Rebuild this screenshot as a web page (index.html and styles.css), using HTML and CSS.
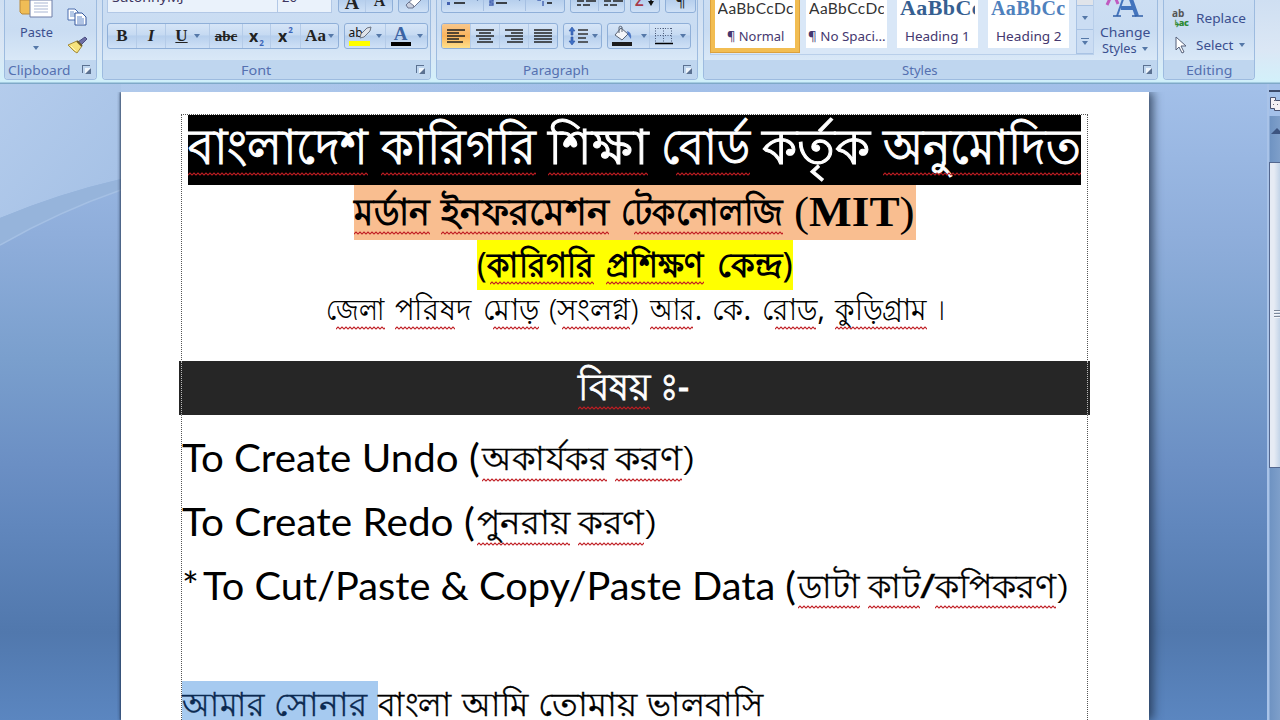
FILE: index.html
```
<!DOCTYPE html>
<html lang="bn">
<head>
    <meta charset="UTF-8">
    <meta name="viewport" content="width=device-width, initial-scale=1.0">
    <title>Document - Microsoft Word</title>
    <link rel="stylesheet" href="styles.css">
</head>
<body>

    <!-- Ribbon -->
    <div class="ribbon">
        <div class="group clipboard">
            <div class="group-body">
                <div class="paste">
                    <svg width="36" height="19" viewBox="0 0 36 19"><path d="M2 0h20v14H4l-2-2z" fill="#f0bd56" stroke="#b98a3c"/><path d="M12 0h22v17H12z" fill="#fff" stroke="#6f7fa8"/><path d="M16 3h14M16 6h14M16 9h14M16 12h14" stroke="#a9b6d3"/></svg>
                    <span class="w" data-w="33"><i>Paste</i></span>
                    <b class="arrow"></b>
                </div>
                <div class="clip-tools">
                    <svg width="20" height="18" viewBox="0 0 20 18"><path d="M1 1h7l3 3v8H1z" fill="#fff" stroke="#4a6cae"/><path d="M3 4h4M3 6h6M3 8h6" stroke="#6f94cf"/><path d="M8 5h7l4 4v8H8z" fill="#fff" stroke="#34569c"/><path d="M10 9h5M10 11h7M10 13h7M10 15h7" stroke="#5f86c9"/></svg>
                    <svg width="20" height="18" viewBox="0 0 20 18"><path d="M18 1l2 2-6 6-3-3z" fill="#6d6fa6" stroke="#4b4d82"/><path d="M1 9l9-4 5 5-5 7-3-2z" fill="#f6e27c" stroke="#a38a3a"/><path d="M10 5l5 5" stroke="#6b5a2a" stroke-width="2"/><path d="M4 10l5 5" stroke="#fff6bb"/></svg>
                </div>
            </div>
            <div class="group-label"><span class="w" data-w="63"><i>Clipboard</i></span><b class="launcher"></b></div>
        </div>

        <div class="group font">
            <div class="group-body rows">
                <div class="row">
                    <div class="combo name"><span class="w" data-w="72"><i>SutonnyMJ</i></span><b class="arrow"></b></div>
                    <div class="combo size"><span>26</span><b class="arrow"></b></div>
                    <div class="box grow"><span class="cell w27 serif">A</span><span class="cell w27 serif small">A</span></div>
                    <div class="box erase"><svg width="22" height="20" viewBox="0 0 22 20"><path d="M3 15L14 5l6 3-9 9H5z" fill="#fff" stroke="#6d7690"/><path d="M3 15l3-3 5 4-1 2H5z" fill="#c9cfdf" stroke="#6d7690"/></svg></div>
                </div>
                <div class="row">
                    <div class="box b-font">
                        <span class="cell c29 serif"><b>B</b></span>
                        <span class="cell c29 serif it">I</span>
                        <span class="cell c44 serif"><u>U</u><b class="arrow"></b></span>
                        <span class="cell c33 serif strike">abc</span>
                        <span class="cell c28 xs">x<sub>2</sub></span>
                        <span class="cell c30 xs">x<sup>2</sup></span>
                        <span class="cell c38 serif aa">Aa<b class="arrow"></b></span>
                    </div>
                    <div class="box b-color">
                        <span class="cell c42"><span class="mark">ab<svg width="14" height="14" viewBox="0 0 14 14"><path d="M3 8l6-6 4-1-1 4-6 6-4 1z" fill="#dfe3ea" stroke="#6a7280"/></svg></span><b class="arrow"></b></span>
                        <span class="cell c41"><span class="fcolor">A</span><b class="arrow"></b></span>
                    </div>
                </div>
            </div>
            <div class="group-label"><span class="w" data-w="30"><i>Font</i></span><b class="launcher"></b></div>
        </div>

        <div class="group para">
            <div class="group-body rows">
                <div class="row">
                    <div class="box p1">
                        <svg width="124" height="22" viewBox="0 0 124 22"><path d="M5 13h3v3H5zM5 7h3v3H5z" fill="#4361b0"/><path d="M12 14h11M12 8h11M54 14h11M54 8h11M105 14h5" stroke="#111" stroke-width="1.4"/><path d="M47 10h4v2h-3v2h3v2h-4M96 7v4h3M101 12v5" stroke="#4361b0" stroke-width="1.4" fill="none"/><path d="M41.500 0v22M83.500 0v22" stroke="#a6c0e2"/><path d="M33 9h5l-2.500 3zM75 9h5l-2.500 3z" fill="#5d7ba8"/></svg>
                    </div>
                    <div class="box p2">
                        <svg width="55" height="22" viewBox="0 0 55 22"><path d="M6 12h7M15 12h10M6 16h4M12 16h7M33 12h7M42 12h10M33 16h4M39 16h7" stroke="#222" stroke-width="1.4"/><path d="M27.500 0v22" stroke="#a6c0e2"/></svg>
                    </div>
                    <div class="box p3"><span class="zed">Z</span><svg width="8" height="22" viewBox="0 0 8 22"><path d="M4 0v14" stroke="#111" stroke-width="1.500"/><path d="M1 12h6l-3 5z" fill="#111"/></svg></div>
                    <div class="box p4">¶</div>
                </div>
                <div class="row">
                    <div class="box align">
                        <span class="cell c29 on"><svg width="19" height="15" viewBox="0 0 19 15"><path d="M0 1h18M0 4h12M0 7h18M0 10h12M0 13h16" stroke="#222" stroke-width="1.500"/></svg></span>
                        <span class="cell c29"><svg width="19" height="15" viewBox="0 0 19 15"><path d="M0 1h18M3 4h12M0 7h18M3 10h12M1 13h16" stroke="#222" stroke-width="1.500"/></svg></span>
                        <span class="cell c29"><svg width="19" height="15" viewBox="0 0 19 15"><path d="M0 1h18M6 4h12M0 7h18M6 10h12M2 13h16" stroke="#222" stroke-width="1.500"/></svg></span>
                        <span class="cell c29"><svg width="19" height="15" viewBox="0 0 19 15"><path d="M0 1h18M0 4h18M0 7h18M0 10h18M0 13h18" stroke="#222" stroke-width="1.500"/></svg></span>
                    </div>
                    <div class="box spacing"><svg width="20" height="20" viewBox="0 0 20 20"><path d="M4 1l3 4H5v4H3V5H1zM4 19l3-4H5v-4H3v4H1z" fill="#3f6fc4" stroke="#2c56a5" stroke-width=".6"/><path d="M10 4h10M10 8h10M10 12h8M10 16h10" stroke="#333" stroke-width="1.400"/></svg><b class="arrow"></b></div>
                    <div class="box shade">
                        <span class="cell c43"><svg width="24" height="22" viewBox="0 0 24 22"><path d="M10 3l7 6-6 6-7-5z" fill="#f3f5f9" stroke="#5a6475"/><path d="M8 8V3q0-3 3-1v5" fill="none" stroke="#5a6475"/><path d="M16 6q5 1 4 8l-3-4z" fill="#4d77c4"/><path d="M1 17h20v4H1z" fill="#1c1c1c"/></svg><b class="arrow"></b></span>
                        <span class="cell c40"><svg width="20" height="20" viewBox="0 0 20 20"><path d="M1 2.500h17M1 9.500h17M1.500 2v14M9.500 2v14M17.500 2v14" stroke="#4b5b7a" stroke-dasharray="1 1.500" fill="none"/><path d="M1 17.500h18" stroke="#000" stroke-width="1.600"/></svg><b class="arrow"></b></span>
                    </div>
                </div>
            </div>
            <div class="group-label"><span class="w" data-w="66"><i>Paragraph</i></span><b class="launcher"></b></div>
        </div>

        <div class="group styles">
            <div class="group-body">
                <div class="gallery">
                    <div class="style on"><div class="preview">AaBbCcDc</div><span class="w" data-w="57"><i>¶ Normal</i></span></div>
                    <div class="style"><div class="preview">AaBbCcDc</div><span class="w" data-w="78"><i>¶ No Spaci...</i></span></div>
                    <div class="style"><div class="preview h1">AaBbCc</div><span class="w" data-w="65"><i>Heading 1</i></span></div>
                    <div class="style"><div class="preview h2">AaBbCc</div><span class="w" data-w="66"><i>Heading 2</i></span></div>
                    <div class="scroll-btns"><span class="up"></span><span><b class="arrow"></b></span><span class="more"><b class="arrow"></b></span></div>
                </div>
                <div class="change">
                    <svg width="42" height="20" viewBox="0 0 42 20"><path d="M3 5L9-8l5 12" fill="none" stroke="#c05ac0" stroke-width="3"/><path d="M13 16L23-12" stroke="#4374bd" stroke-width="2"/><path d="M23-12l10 28M17 8h12" fill="none" stroke="#4374bd" stroke-width="4"/><path d="M9 16h8M28 16h11" stroke="#305fa8" stroke-width="1.500"/></svg>
                    <span class="w" data-w="50"><i>Change</i></span>
                    <div class="line2"><span class="w" data-w="35"><i>Styles</i></span><b class="arrow"></b></div>
                </div>
            </div>
            <div class="group-label"><span class="w" data-w="36"><i>Styles</i></span><b class="launcher"></b></div>
        </div>

        <div class="group editing">
            <div class="group-body rows">
                <div class="edit-row"><span class="swap"><em>ab</em><strong>↳ac</strong></span><span class="w" data-w="50"><i>Replace</i></span></div>
                <div class="edit-row"><svg width="20" height="18" viewBox="0 0 20 18"><path d="M4 1v13l3-3 3 6 2-1-3-6h5z" fill="#fff" stroke="#555f78"/></svg><span class="w" data-w="37"><i>Select</i></span><b class="arrow"></b></div>
            </div>
            <div class="group-label"><span class="w" data-w="46"><i>Editing</i></span></div>
        </div>
    </div>

    <!-- Workspace -->
    <div class="workspace">
        <svg class="swoosh" width="121" height="165" viewBox="0 0 121 165">
            <defs><linearGradient id="sky" x1="0" y1="0" x2="1" y2="1"><stop offset="0" stop-color="#b4ccec"/><stop offset="1" stop-color="#a4c0e5"/></linearGradient></defs>
            <path d="M0 0H121V95Q60 109 0 134z" fill="url(#sky)"/>
            <path d="M0 134Q60 109 121 95V106Q60 127 0 161z" fill="#96b4db"/>
            <path d="M0 161Q60 127 121 106" fill="none" stroke="#a5c0e4" stroke-width="1.500"/>
        </svg>
        <div class="page">
            <div class="frame">
                <div class="line l1">
                    <span class="w sp" data-w="180"><i>বাংলাদেশ</i></span>
                    <span class="w sp" data-w="155"><i>কারিগরি</i></span>
                    <span class="w sp" data-w="100"><i>শিক্ষা</i></span>
                    <span class="w sp in15" data-w="89"><i>বোর্ড</i></span>
                    <span class="w" data-w="108"><i>কর্তৃক</i></span>
                    <span class="w sp" data-w="198"><i>অনুমোদিত</i></span>
                </div>
                <div class="line l2">
                    <span class="w sp" data-w="76"><i>মর্ডান</i></span>
                    <span class="w sp" data-w="168"><i>ইনফরমেশন</i></span>
                    <span class="w sp in13" data-w="162"><i>টেকনোলজি</i></span>
                    <span class="w mit" data-w="121"><i><em>(</em>MIT<em>)</em></i></span>
                </div>
                <div class="line l3">
                    <span class="w sp in13" data-w="117"><i><em>(</em>কারিগরি</i></span>
                    <span class="w sp" data-w="98"><i>প্রশিক্ষণ</i></span>
                    <span class="w" data-w="76"><i>কেন্দ্র<em>)</em></i></span>
                </div>
                <div class="line l4">
                    <span class="w sp in10" data-w="59"><i>জেলা</i></span>
                    <span class="w sp cut" data-w="77"><i>পরিষদ</i></span>
                    <span class="w sp in10" data-w="56"><i>মোড়</i></span>
                    <span class="w sp in13 cut10" data-w="90"><i><em>(</em>সংলগ্ন<em>)</em></i></span>
                    <span class="w sp cut10" data-w="52"><i>আর.</i></span>
                    <span class="w" data-w="39"><i>কে.</i></span>
                    <span class="w sp in13 cut10" data-w="63"><i>রোড,</i></span>
                    <span class="w sp" data-w="92"><i>কুড়িগ্রাম</i></span>
                    <span class="w" data-w="6"><i>।</i></span>
                </div>
                <div class="line l5">
                    <span class="w sp" data-w="72"><i>বিষয়</i></span>
                    <span class="w" data-w="39"><i>&nbsp;ঃ-</i></span>
                </div>
                <div class="line l6 body-line">
                    <span class="w latin" data-w="298"><i>To Create Undo (</i></span>
                    <span class="w sp" data-w="125"><i>অকার্যকর</i></span>
                    <span class="w sp gap" data-w="67"><i>করণ</i></span>
                    <span class="w thin" data-w="12"><i>)</i></span>
                </div>
                <div class="line l7 body-line">
                    <span class="w latin" data-w="293"><i>To Create Redo (</i></span>
                    <span class="w sp" data-w="93"><i>পুনরায়</i></span>
                    <span class="w sp gap" data-w="66"><i>করণ</i></span>
                    <span class="w thin" data-w="12"><i>)</i></span>
                </div>
                <div class="line l8 body-line">
                    <span class="w latin" data-w="614"><i>*<s></s>To Cut/Paste &amp; Copy/Paste Data (</i></span>
                    <span class="w sp" data-w="62"><i>ডাটা</i></span>
                    <span class="w sp gap" data-w="52"><i>কাট</i></span>
                    <span class="w slash" data-w="15"><i>/</i></span>
                    <span class="w sp" data-w="121"><i>কপিকরণ</i></span>
                    <span class="w thin" data-w="12"><i>)</i></span>
                </div>
                <div class="line l9 body-line">
                    <span class="selected">
                        <span class="w" data-w="82"><i>আমার</i></span>
                        <span class="w" data-w="93"><i>সোনার</i></span>
                    </span>
                    <span class="w" data-w="74"><i>বাংলা</i></span>
                    <span class="w" data-w="66"><i>আমি</i></span>
                    <span class="w" data-w="99"><i>তোমায়</i></span>
                    <span class="w" data-w="116"><i>ভালবাসি</i></span>
                </div>
            </div>
        </div>
        <div class="scrollbar">
            <div class="split"></div>
            <svg class="ruler-btn" width="11" height="16" viewBox="0 0 11 16"><path d="M1.500 1.500h5v3h6v10h-7v-2h-4z" fill="#f4f0f4" stroke="#4a5270"/><path d="M5 4l1 1M8 8l1 1M4 8l1 1" stroke="#667"/></svg>
            <div class="sb-up"><b></b></div>
            <div class="thumb"><b></b></div>
        </div>
    </div>

    <script>
        // Stretch or squeeze every word to its width in the line
        document.querySelectorAll('.w').forEach(function(word) {
            const inner = word.firstElementChild;
            const width = Number(word.dataset.w);
            const scale = width / inner.offsetWidth;
            word.style.width = width + 'px';
            inner.style.transform = 'scaleX(' + scale + ')';
        });
    </script>

</body>
</html>
```
FILE: styles.css
```
* {
    box-sizing: border-box;
}
body {
    margin: 0;
    width: 1280px;
    height: 720px;
    overflow: hidden;
    font-family: "Noto Sans", "Open Sans", sans-serif;
    font-size: 12px;
    color: #3b4f8f;
}
svg {
    display: block;
    flex: none;
}

/* Words with a fixed width */
.w {
    display: inline-block;
    position: relative;
    flex: none;
    white-space: nowrap;
}
.w i {
    display: inline-block;
    font-style: normal;
    transform-origin: 0 50%;
}
.w em {
    font-style: normal;
    font-weight: normal;
}

/* Ribbon */
.ribbon {
    display: flex;
    gap: 5px;
    height: 84px;
    padding: 0 0 4px 4px;
    overflow: hidden;
    background: linear-gradient(#cfdff2 0, #dbe7f5 50px, #d3f0fa 80px, #cbeffa 82px, #7fa9c8 83px);
}
.group {
    display: flex;
    flex-direction: column;
    height: 80px;
    flex: none;
    overflow: hidden;
    border: 1px solid #9dbbdf;
    border-top: 0;
    border-radius: 0 0 4px 4px;
    background: linear-gradient(#ccdef3, #c9dcf2 30px, #d9e8f7 60px);
}
.clipboard { width: 93px; }
.font { width: 329px; }
.para { width: 262px; }
.styles { width: 455px; }
.editing { width: 92px; }
.group-body {
    display: flex;
    height: 60px;
    flex: none;
}
.rows {
    flex-direction: column;
    justify-content: flex-end;
    gap: 10px;
    padding: 0 0 11px 4px;
}
.group-label {
    display: flex;
    align-items: center;
    justify-content: center;
    height: 20px;
    position: relative;
    background: #bfd6ef;
    color: #5570b0;
    padding: 2px 22px 0 0;
}
.editing .group-label { padding-right: 0; }
.launcher {
    position: absolute;
    right: 6px;
    top: 5px;
    width: 8px;
    height: 8px;
    border-left: 1px solid #5b7191;
    border-top: 1px solid #5b7191;
}
.launcher::after {
    content: "";
    position: absolute;
    right: -1px;
    bottom: -1px;
    border: 3px solid #5b7191;
    border-left-color: #eef5fc;
    border-top-color: #eef5fc;
}
.arrow {
    display: inline-block;
    border: 3.5px solid transparent;
    border-top: 4px solid #5578a8;
    border-bottom: 0;
    flex: none;
}

/* Clipboard */
.paste {
    display: flex;
    flex-direction: column;
    align-items: center;
    width: 62px;
}
.paste .w {
    margin-top: 5px;
    margin-bottom: 5px;
}
.clip-tools {
    display: flex;
    flex-direction: column;
    gap: 10px;
    padding-top: 8px;
}

/* Buttons */
.row {
    display: flex;
    height: 26px;
    flex: none;
}
.box {
    display: flex;
    align-items: center;
    height: 26px;
    border: 1px solid #8fafd8;
    border-radius: 3px;
    background: linear-gradient(#d6e5f7, #c6daf2 45%, #b6cfed 50%, #cfe1f6);
    margin-right: 5px;
    flex: none;
    color: #222;
    overflow: hidden;
}
.cell {
    display: flex;
    align-items: center;
    justify-content: center;
    gap: 6px;
    height: 24px;
    border-right: 1px solid #b4cbe8;
    flex: none;
}
.cell:last-child { border-right: 0; }
.c28 { width: 28px; }
.c29 { width: 29px; }
.c30 { width: 30px; }
.c33 { width: 33px; }
.c38 { width: 37px; }
.c40 { width: 39px; }
.c41 { width: 41px; }
.c42 { width: 41px; }
.c43 { width: 42px; }
.c44 { width: 44px; }
.w27 { width: 27px; }
.serif {
    font-family: "Liberation Serif", serif;
    font-size: 17px;
    font-weight: bold;
}
.it { font-style: italic; }
.strike { font-size: 15px; text-decoration: line-through; }
.aa { gap: 2px; }
.xs {
    font-family: "Open Sans", sans-serif;
    font-weight: bold;
    font-size: 16px;
    gap: 1px;
}
.xs sub, .xs sup { font-size: 8px; color: #3a64b8; }
.xs sub { align-self: flex-end; }
.xs sup { align-self: flex-start; }
.combo {
    display: flex;
    justify-content: space-between;
    align-items: center;
    height: 26px;
    padding: 0 6px 7px 4px;
    border: 1px solid #b2c8e6;
    background: #eaf2fb;
    color: #3f3560;
    font-size: 13px;
    line-height: 16px;
    flex: none;
}
.combo .arrow { border-top-width: 3px; margin-bottom: 8px; }
.name { width: 171px; }
.name + .size { width: 54px; border-left: 0; margin-right: 6px; }
.grow { width: 55px; }
.grow .serif { font-size: 20px; line-height: 20px; align-items: flex-start; padding-top: 4px; }
.grow .small { font-size: 16px; padding-top: 3px; }
.erase { width: 31px; padding-left: 4px; }
.b-font { width: 232px; }
.b-color { width: 84px; }
.mark {
    display: flex;
    width: 21px;
    height: 20px;
    border-bottom: 5px solid #ff0;
    font-size: 12px;
    line-height: 13px;
    color: #111;
}
.mark svg { margin-left: -5px; }
.fcolor {
    width: 20px;
    height: 20px;
    border-bottom: 4px solid #000;
    font-family: "Liberation Serif", serif;
    font-weight: bold;
    font-size: 19px;
    line-height: 15px;
    text-align: center;
    color: #3c64a4;
}
.p1 { width: 124px; }
.p2 { width: 55px; }
.p3 { width: 30px; padding-left: 4px; gap: 3px; }
.p4 { width: 31px; justify-content: center; font-size: 16px; }
.zed { color: #a83a4a; font: bold 14px "Liberation Sans", sans-serif; padding-top: 2px; }
.align { width: 117px; }
.on.cell { background: linear-gradient(#f8c78c, #fbb45c 50%, #fee08a); }
.spacing { width: 39px; justify-content: center; gap: 4px; }
.shade { width: 84px; }

/* Styles gallery */
.gallery {
    display: flex;
    gap: 10px;
    width: 384px;
    height: 55px;
    margin-left: 6px;
    border: 1px solid #b9cfea;
    border-top: 0;
    background: #d9e7f7;
    flex: none;
    padding-left: 4px;
}
.style {
    display: flex;
    flex-direction: column;
    align-items: center;
    width: 81px;
    height: 48px;
    background: #fff;
    flex: none;
    color: #45386f;
    font-size: 12px;
}
.style.on {
    width: 80px;
    margin-right: 1px;
    box-shadow: 0 0 0 4px #f2bd52, 0 0 0 5px #dca13c;
}
.preview {
    width: 75px;
    height: 28px;
    overflow: hidden;
    white-space: nowrap;
    font-family: Lato, sans-serif;
    font-size: 15.5px;
    letter-spacing: .4px;
    line-height: 16px;
    color: #333;
}
.preview.h1, .preview.h2 {
    font-family: "Liberation Serif", "DejaVu Serif", serif;
    font-weight: bold;
    font-size: 22px;
    color: #365f91;
}
.preview.h2 { font-size: 20px; color: #4f81bd; }
.scroll-btns {
    display: flex;
    flex-direction: column;
    width: 17px;
    margin-left: -3px;
    flex: none;
    border-left: 1px solid #a9c3e4;
}
.scroll-btns span {
    display: flex;
    flex-direction: column;
    align-items: center;
    justify-content: center;
    gap: 2px;
    height: 24px;
    border-bottom: 1px solid #a9c3e4;
    background: #cbddf3;
}
.scroll-btns .up { height: 6px; background: #e0e4ea; }
.scroll-btns .more::before {
    content: "";
    width: 8px;
    height: 1px;
    background: #5578a8;
}
.change {
    display: flex;
    flex-direction: column;
    align-items: center;
    width: 62px;
    line-height: 16px;
}
.change > .w { margin-top: 5px; }
.line2 {
    display: flex;
    align-items: center;
    gap: 5px;
}
.editing .rows { padding: 0 0 3px 8px; gap: 3px; }
.edit-row {
    display: flex;
    align-items: center;
    height: 24px;
    gap: 4px;
}
.edit-row .arrow { margin-left: 2px; }
.swap {
    display: flex;
    flex-direction: column;
    width: 20px;
    font: bold 10px/9px "Open Sans", sans-serif;
    white-space: nowrap;
}
.swap em { font-style: normal; color: #555; }
.swap strong { color: #2f8a35; font-size: 9px; letter-spacing: -.3px; }

/* Workspace */
.workspace {
    display: flex;
    justify-content: space-between;
    height: 636px;
    position: relative;
    padding-left: 121px;
    background:
        linear-gradient(to right, #b4ccec, rgba(180, 204, 236, 0) 600px) 0 0 / 100% 8px no-repeat,
        linear-gradient(#a3c0e9 0, #8faedb 150px, #7a9fcd 275px, #6b8fc4 380px, #6187bd 440px, #5178ad 548px, #5b86c0 636px);
}
.swoosh {
    position: absolute;
    left: 0;
    top: 0;
}
.page {
    width: 1028px;
    margin-top: 8px;
    padding: 22px 61px 0 60px;
    background: #fff;
    box-shadow: 4px 0 9px rgba(30, 45, 70, .75), -1px 0 2px rgba(40, 60, 90, .8);
    clip-path: inset(0 -16px 0 -4px);
    position: relative;
}
.frame {
    height: 620px;
    border: 1px dotted #555;
    border-bottom: 0;
    color: #000;
}

/* Text lines, --sq is the offset of the spelling mark */
.line {
    display: flex;
    justify-content: space-between;
    margin: 0 auto;
    position: relative;
}
.sp::after {
    content: "";
    position: absolute;
    left: 0;
    right: 0;
    top: var(--sq);
    height: 4px;
    background: url("data:image/svg+xml,%3Csvg xmlns='http://www.w3.org/2000/svg' width='4' height='4'%3E%3Cpath d='M-1 4L2 1L5 4' fill='none' stroke='%23c01c22' stroke-width='1.1'/%3E%3C/svg%3E") repeat-x;
}
.in10::after { left: 10px; }
.in13::after { left: 13px; }
.in15::after { left: 15px; }
.cut::after { right: 17px; }
.cut10::after { right: 9px; }
.l1 {
    --sq: 57px;
    width: 893px;
    height: 70px;
    background: #000;
    color: #fff;
    font-size: 49px;
    line-height: 60px;
    -webkit-text-stroke: 1px #fff;
}
.l2 {
    --sq: 46px;
    width: 562px;
    height: 55px;
    background: #f9be90;
    font-size: 37px;
    line-height: 52px;
    font-weight: bold;
}
.mit {
    font-family: "Liberation Serif", serif;
    font-size: 43px;
    line-height: 54px;
}
.l3 {
    --sq: 41px;
    width: 316px;
    height: 50px;
    background: #ff0;
    font-size: 34px;
    line-height: 48px;
    font-weight: 600;
}
.l4 {
    --sq: 36px;
    width: 618px;
    height: 71px;
    font-size: 30px;
    line-height: 37px;
}
.l4 em { font-weight: 300; }
.l5 {
    --sq: 45px;
    margin: 0 -3px;
    height: 54px;
    justify-content: center;
    background: #262626;
    color: #fff;
    font-size: 38px;
    line-height: 49px;
    padding-right: 3px;
    -webkit-text-stroke: .8px #fff;
}
.l5::before {
    content: "";
    position: absolute;
    left: 2px;
    right: 2px;
    top: 0;
    bottom: 0;
    border: dotted #bbb;
    border-width: 0 1px;
}
.body-line {
    justify-content: flex-start;
    font-size: 33px;
    -webkit-text-stroke: .3px #000;
}
.latin {
    font-family: Lato, sans-serif;
    font-size: 38px;
    margin-right: 2px;
    -webkit-text-stroke: 0;
}
.latin s {
    display: inline-block;
    width: 4px;
}
.thin { font-weight: 300; -webkit-text-stroke: 0; }
.gap { margin-left: 8px; }
.l6, .l7, .l8 {
    --sq: 49px;
    height: 64px;
    line-height: 58px;
}
.l6 .latin, .l7 .latin { line-height: 57px; }
.l6 { margin-top: 14px; }
.l8 { height: 63px; line-height: 57px; --sq: 48px; }
.l8 .latin { line-height: 56px; }
.l9 {
    gap: 10px;
    margin-top: 61px;
    line-height: 45px;
    height: 50px;
}
.selected {
    display: flex;
    gap: 10px;
    width: 196px;
    margin-right: -10px;
    background: #a6caf0;
    color: #0c2a52;
    -webkit-text-stroke: .3px #0c2a52;
}

/* Scrollbar */
.scrollbar {
    width: 13px;
    height: 636px;
    padding-left: 2px;
    background: linear-gradient(to right, #a9c3e8 2px, #6f93c2 3px, #7e9fca);
}
.split {
    height: 8px;
    border-bottom: 2px solid #3b4a6b;
    background: #a3c0e9;
}
.ruler-btn {
    height: 24px;
    padding: 4px 0;
    background: #a3c0e9;
}
.sb-up { height: 46px; padding: 12px 0 0 2px; }
.sb-up b {
    display: block;
    border: 6px solid transparent;
    border-bottom: 6px solid #3c5480;
    border-top: 0;
}
.thumb {
    height: 306px;
    border: 1px solid #53678f;
    border-right: 0;
    background: linear-gradient(to right, #e6ebf4 4px, #c3d4e8);
    padding: 147px 0 0 4px;
}
.thumb b {
    display: block;
    height: 9px;
    background: repeating-linear-gradient(#7c8798 0 1px, #f4f6fa 1px 2px, transparent 2px 3px);
}
```
